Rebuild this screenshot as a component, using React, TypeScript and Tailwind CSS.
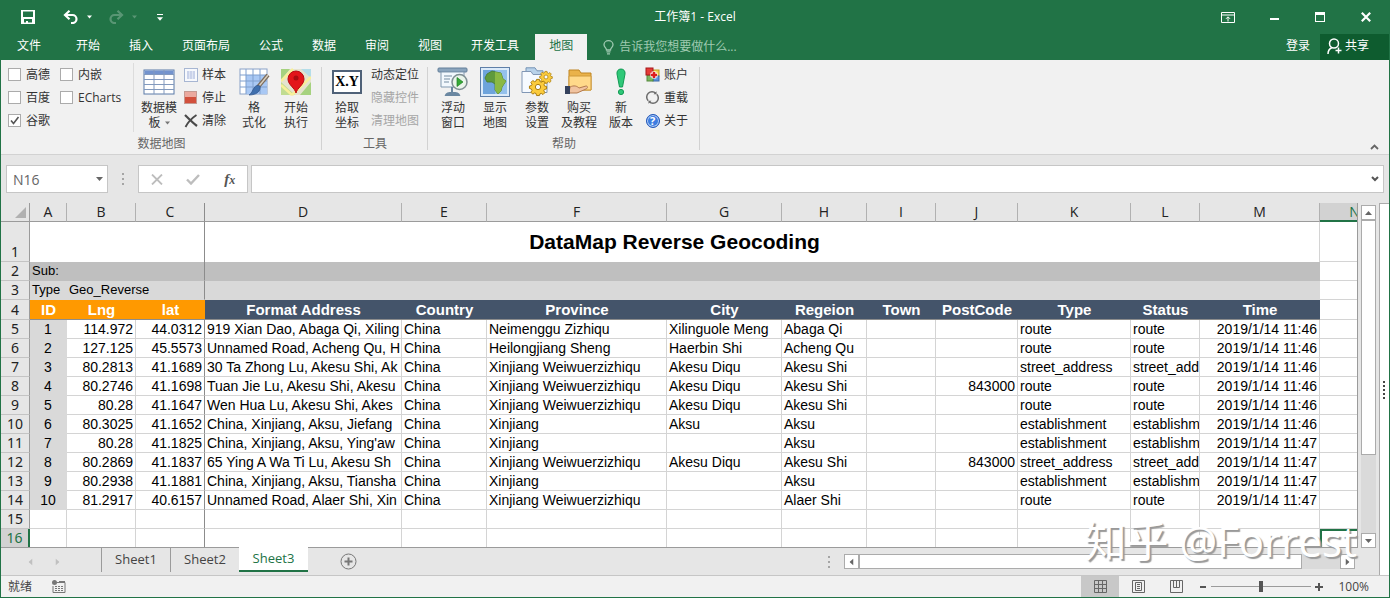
import type { ReactNode } from "react";
import clsx from "clsx";

const menuTabs = ["开始", "插入", "页面布局", "公式", "数据", "审阅", "视图", "开发工具"];

const columns = [
  { name: "A", width: 37 },
  { name: "B", width: 69 },
  { name: "C", width: 69 },
  { name: "D", width: 197 },
  { name: "E", width: 85 },
  { name: "F", width: 180 },
  { name: "G", width: 115 },
  { name: "H", width: 85 },
  { name: "I", width: 69 },
  { name: "J", width: 82 },
  { name: "K", width: 113 },
  { name: "L", width: 69 },
  { name: "M", width: 120 },
  { name: "N", width: 69 },
];

const headings = [
  "ID", "Lng", "lat", "Format Address", "Country", "Province", "City",
  "Regeion", "Town", "PostCode", "Type", "Status", "Time",
];

const rows = [
  ["1", "114.972", "44.0312", "919 Xian Dao, Abaga Qi, Xiling", "China", "Neimenggu Zizhiqu", "Xilinguole Meng", "Abaga Qi", "", "", "route", "route", "2019/1/14 11:46"],
  ["2", "127.125", "45.5573", "Unnamed Road, Acheng Qu, H", "China", "Heilongjiang Sheng", "Haerbin Shi", "Acheng Qu", "", "", "route", "route", "2019/1/14 11:46"],
  ["3", "80.2813", "41.1689", "30 Ta Zhong Lu, Akesu Shi, Ak", "China", "Xinjiang Weiwuerzizhiqu", "Akesu Diqu", "Akesu Shi", "", "", "street_address", "street_address", "2019/1/14 11:46"],
  ["4", "80.2746", "41.1698", "Tuan Jie Lu, Akesu Shi, Akesu", "China", "Xinjiang Weiwuerzizhiqu", "Akesu Diqu", "Akesu Shi", "", "843000", "route", "route", "2019/1/14 11:46"],
  ["5", "80.28", "41.1647", "Wen Hua Lu, Akesu Shi, Akes", "China", "Xinjiang Weiwuerzizhiqu", "Akesu Diqu", "Akesu Shi", "", "", "route", "route", "2019/1/14 11:46"],
  ["6", "80.3025", "41.1652", "China, Xinjiang, Aksu, Jiefang", "China", "Xinjiang", "Aksu", "Aksu", "", "", "establishment", "establishment", "2019/1/14 11:46"],
  ["7", "80.28", "41.1825", "China, Xinjiang, Aksu, Ying'aw", "China", "Xinjiang", "", "Aksu", "", "", "establishment", "establishment", "2019/1/14 11:47"],
  ["8", "80.2869", "41.1837", "65 Ying A Wa Ti Lu, Akesu Sh", "China", "Xinjiang Weiwuerzizhiqu", "Akesu Diqu", "Akesu Shi", "", "843000", "street_address", "street_address", "2019/1/14 11:47"],
  ["9", "80.2938", "41.1881", "China, Xinjiang, Aksu, Tiansha", "China", "Xinjiang", "", "Aksu", "", "", "establishment", "establishment", "2019/1/14 11:47"],
  ["10", "81.2917", "40.6157", "Unnamed Road, Alaer Shi, Xin", "China", "Xinjiang Weiwuerzizhiqu", "", "Alaer Shi", "", "", "route", "route", "2019/1/14 11:47"],
];

const rightAligned = [1, 2, 9, 12];

/* ---------- icons ---------- */

function Caret({ className }: { className?: string }) {
  return (
    <svg width="7" height="4" viewBox="0 0 7 4" className={className}>
      <path d="M0 0h7L3.5 4z" fill="currentColor" />
    </svg>
  );
}

const SaveIcon = () => (
  <svg width="14" height="14" viewBox="0 0 14 14">
    <path
      fill="#fff"
      fillRule="evenodd"
      d="M0 0h14v14H0zM2 1.500v5.500h10V1.500zM3 9v3.500h2V11h2v1.500h4V9z"
    />
  </svg>
);

const UndoIcon = ({ flip }: { flip?: boolean }) => (
  <svg width="16" height="14" viewBox="0 0 16 14" className={flip ? "-scale-x-100 opacity-25" : ""}>
    <path d="M2 5h7.500a4 4 0 0 1 0 8H8" fill="none" stroke="#fff" strokeWidth="2.200" />
    <path d="M6.500.8L2 5l4.500 4.200" fill="none" stroke="#fff" strokeWidth="2.200" />
  </svg>
);

const BulbIcon = () => (
  <svg width="11" height="15" viewBox="0 0 11 15" fill="none" stroke="#9fcab1" strokeWidth="1.300">
    <path d="M3.500 10c0-2-2.500-2.800-2.500-5.300a4.500 4 0 0 1 9 0C10 7.200 7.500 8 7.500 10z" />
    <path d="M3.500 11.800h4M4 13.800h3" />
  </svg>
);

const PersonIcon = () => (
  <svg width="16" height="17" viewBox="0 0 16 17" fill="none" stroke="#fff" strokeWidth="1.500">
    <circle cx="7" cy="5.500" r="4.500" />
    <path d="M1 16c0-3.500 1.800-5.500 4-6.500M11.500 9.500v6M8.500 12.500h6" />
  </svg>
);

const DataTableIcon = () => (
  <svg width="32" height="28" viewBox="0 0 32 28">
    <rect x="1" y="2" width="30" height="24" fill="#fff" stroke="#5a7aa8" />
    <rect x="1.500" y="2.500" width="29" height="4" fill="#7393ce" />
    <path d="M1 6.500h30M1 11.500h30M1 16.500h30M1 21.500h30M11 2v24M21 2v24" stroke="#8299bd" />
  </svg>
);

const FormatIcon = () => (
  <svg width="32" height="30" viewBox="0 0 32 30">
    <rect x="2" y="2" width="27" height="25" fill="#fff" stroke="#8aa2c8" />
    <path d="M8 8h21v19H8z" fill="#a9c8f4" />
    <path d="M2 8h27M2 14h27M2 20h27M8 2v25M15 2v25M22 2v25" stroke="#7f9fce" />
    <path d="M30 8L20 20" stroke="#7b6a58" strokeWidth="4" />
    <path d="M30 8L21 19" stroke="#d8cfc0" strokeWidth="1.500" />
    <path d="M22 19c1 5-3 9-11 9 3-2 3-4 5-7 2-3 4-3 6-2z" fill="#3f6fae" stroke="#2b5088" strokeWidth=".7" />
  </svg>
);

const MapPinIcon = () => (
  <svg width="30" height="28" viewBox="0 0 30 28">
    <path d="M0 1h30v26H0z" fill="#e5e3cf" />
    <path d="M0 1h9L0 12zM19 27L30 14v13z" fill="#a6d27f" />
    <path d="M0 14L14 27H0z" fill="#c1dc92" />
    <path d="M20 1h10v9z" fill="#b4dde9" />
    <path d="M0 13L12 1M11 27L30 9M0 17l11 10" stroke="#f8ef9a" strokeWidth="2.500" />
    <path d="M15 25c-1-5-8-8-8-14a8 8 0 0 1 16 0c0 6-7 9-8 14z" fill="#e3151a" stroke="#b80c12" />
    <circle cx="15" cy="10" r="2.500" fill="#a80d10" />
  </svg>
);

const CoordIcon = () => (
  <span className="flex h-6 w-[30px] items-center justify-center border-2 border-[#4f6178] bg-white font-['Liberation_Serif',serif] text-[14px] leading-none font-bold text-black">
    X.Y
  </span>
);

const BoardIcon = () => (
  <svg width="32" height="30" viewBox="0 0 32 30">
    <rect x="1" y="1" width="29" height="4" rx="1" fill="#8ba5bd" stroke="#637f99" />
    <path d="M4 5h23v15H4z" fill="#f2f8fd" stroke="#8199b0" />
    <path d="M7 9h8M7 12h6M7 15h5" stroke="#9fb0c0" strokeWidth="1.500" />
    <path d="M15 20v6M9 28c1-3 12-3 13 0z" fill="#7d9ab5" stroke="#6a87a1" strokeWidth="2" />
    <circle cx="22.500" cy="15" r="7.500" fill="#eaf4ea" stroke="#7e8e92" strokeWidth="1.500" />
    <path d="M20 10.500v9l6-4.500z" fill="#35a935" stroke="#1d7e25" strokeWidth=".7" />
  </svg>
);

const ContinentIcon = () => (
  <svg width="30" height="30" viewBox="0 0 30 30">
    <rect x=".5" y=".5" width="29" height="29" fill="#dcebfa" stroke="#5f7fa8" />
    <path d="M3 3h12v24H3z" fill="#6ea4dc" />
    <path d="M15 3h12v24H15z" fill="#94c1ec" />
    <path d="M7 7l5-3 4 1 5 1 2 6 3 2-4 6-1 4-3 3-3-4v-6l-3-2-5 0-2-4z" fill="#5f9a3c" stroke="#48792c" strokeWidth=".8" />
    <path d="M15 5l6 1 2 6 3 2-4 6-1 4-3 3-3-4z" fill="#8ab944" />
  </svg>
);

const Gear = ({ x, y, scale }: { x: number; y: number; scale: number }) => (
  <g transform={`translate(${x} ${y}) scale(${scale})`} stroke="#a87808">
    <path
      d="M-1.500-8h3l.5 2.200 1.600.7L5.600-6.300l2 2L6.300-2.400l.6 1.400L9-.500v2.500l-2.300.6-.6 1.400 1.200 1.900-2 2-1.900-1.200-1.400.6L1.500 9h-3l-.5-2.100-1.600-.6-1.900 1.200-2-2 1.200-1.900-.6-1.400L-9 1.500v-2.500l2.100-.5.6-1.400-1.200-1.900 2-2 1.900 1.200 1.600-.7z"
      fill="#fbcb3c"
    />
    <circle r="2.800" fill="#f6faff" />
  </g>
);

const GearsIcon = () => (
  <svg width="32" height="30" viewBox="0 0 32 30">
    <path d="M5 .8h9l2 3h6V20H5z" fill="#b8d2ea" stroke="#7793b5" />
    <path d="M1 4.500h9l2 3h14v18H1z" fill="#f6faff" stroke="#8197b5" />
    <Gear x={25} y={10} scale={0.7} />
    <Gear x={17} y={20} scale={0.95} />
  </svg>
);

const FolderIcon = () => (
  <svg width="30" height="30" viewBox="0 0 30 30">
    <path d="M5 3h10l2 3h10v17H5z" fill="#eab24a" stroke="#bf8523" />
    <path d="M5 9h22v14H5z" fill="#ffd98a" stroke="#cf9a3a" />
    <path d="M6 20c4-2 7-1 9 1l7-2c2 0 2 2 0 3l-9 4-8 0z" fill="#f0c3a0" stroke="#b37a4e" />
    <path d="M1 19h5v8H1z" fill="#34415c" />
  </svg>
);

const ExclaimIcon = () => (
  <svg width="12" height="30" viewBox="0 0 12 30">
    <path d="M6 2c2.500 0 4.500 2 4 5L7.500 20h-3L2 7c-.5-3 1.500-5 4-5z" fill="#2fc878" stroke="#139a54" />
    <circle cx="6" cy="25" r="2.600" fill="#2fc878" stroke="#139a54" />
  </svg>
);

const SampleIcon = () => (
  <svg width="14" height="14" viewBox="0 0 14 14">
    <rect x=".5" y=".5" width="13" height="13" fill="#f7f9fd" stroke="#a7b6d2" />
    <path d="M3 3h8v8H3z" fill="#c9d2ea" />
    <path d="M5.500 3v8M8.500 3v8" stroke="#dfe5f3" />
  </svg>
);

const StopIcon = () => (
  <svg width="13" height="13" viewBox="0 0 13 13">
    <rect x=".5" y=".5" width="12" height="12" fill="#d2503c" stroke="#c59a92" />
    <path d="M1 1h11v5H1z" fill="#eba99e" />
  </svg>
);

const ClearIcon = () => (
  <svg width="14" height="14" viewBox="0 0 14 14" fill="none" stroke="#4a4a4a">
    <path d="M1 1c4 4 8 8 12 11" strokeWidth="2.200" />
    <path d="M12.500 1C8 4 4 8 1.500 13" strokeWidth="1.800" />
  </svg>
);

const AccountIcon = () => (
  <svg width="15" height="15" viewBox="0 0 15 15">
    <rect x="6" y="3" width="8" height="6" fill="#f5d24e" stroke="#c19b22" />
    <rect x="8" y="9" width="6" height="5" fill="#5d93dc" stroke="#3968a8" />
    <rect x="2" y="8" width="6" height="6" fill="#7bb661" stroke="#54893d" />
    <rect x="1" y="1" width="7" height="7" fill="#e43b36" stroke="#a7191a" />
    <path d="M9 4.500v7M5.500 8h7" stroke="#fff" strokeWidth="4.500" />
    <path d="M9 5v6M6 8h6" stroke="#dc1f1f" strokeWidth="2.600" />
  </svg>
);

const ReloadIcon = () => (
  <svg width="15" height="15" viewBox="0 0 15 15" fill="none" stroke="#6b6b6b" strokeWidth="1.500">
    <path d="M3.200 10.800A5.300 5.300 0 0 1 10.800 3.400M11.800 4.200A5.300 5.300 0 0 1 4.200 11.700" />
    <path d="M11.500 1.200v3H8.500zM3.500 13.800v-3h3z" fill="#6b6b6b" stroke="none" />
  </svg>
);

const HelpIcon = () => (
  <span className="flex size-[14px] items-center justify-center rounded-full border border-[#2458b8] bg-[#3d7de0] text-[11px] leading-none font-bold text-white shadow-[inset_0_0_0_1px_#b9d2f7]">
    ?
  </span>
);

/* ---------- ribbon ---------- */

function Check({ label, checked }: { label: string; checked?: boolean }) {
  return (
    <label className="flex h-[23px] items-center gap-[5px]">
      <input
        type="checkbox"
        defaultChecked={checked}
        className="peer size-[13px] shrink-0 appearance-none border border-[#ababab] bg-white"
      />
      <svg
        viewBox="0 0 13 13"
        className="invisible -ml-[18px] size-[13px] shrink-0 peer-checked:visible"
        fill="none"
        stroke="#555"
        strokeWidth="1.6"
      >
        <path d="M3 6.500l2.500 3L10.500 3" />
      </svg>
      {label}
    </label>
  );
}

function BigButton({ icon, lines, caret }: { icon: ReactNode; lines: string[]; caret?: boolean }) {
  return (
    <button className="flex w-[42px] flex-col items-center whitespace-nowrap">
      <span className="flex h-[37px] items-center">{icon}</span>
      <span className="leading-[15px]">{lines[0]}</span>
      <span className="flex items-center gap-1 leading-[15px]">
        {lines[1]}
        {caret && <Caret className="w-[5px] text-[#777]" />}
      </span>
    </button>
  );
}

function SmallButton({ icon, label, disabled }: { icon?: ReactNode; label: string; disabled?: boolean }) {
  return (
    <button disabled={disabled} className="flex h-[23px] items-center gap-1 whitespace-nowrap disabled:text-[#a6a6a6]">
      {icon && <span className="flex w-[15px] justify-center">{icon}</span>}
      {label}
    </button>
  );
}

function Group({ title, className, children }: { title?: string; className?: string; children: ReactNode }) {
  return (
    <section className="relative flex flex-col after:absolute after:top-1 after:right-0 after:bottom-1 after:w-px after:bg-[#d2d2d2]">
      <div className={clsx("flex h-[71px] items-start pl-1", className)}>{children}</div>
      <h2 className="text-center leading-[20px] text-[#666]">{title}</h2>
    </section>
  );
}

function Ribbon() {
  return (
    <div className="flex border-b border-[#d2d2d2] bg-[#f1f1f1] pt-[3px]">
      <Group title="数据地图" className="pr-[5px]">
        <div className="mr-1 grid grid-cols-[52px_73px] grid-rows-3 border-r border-[#dcdcdc] pl-[3px]">
          <Check label="高德" />
          <Check label="内嵌" />
          <Check label="百度" />
          <Check label="ECharts" />
          <Check label="谷歌" checked />
        </div>
        <BigButton icon={<DataTableIcon />} lines={["数据模", "板"]} caret />
        <div className="mx-[3px] w-[47px]">
          <SmallButton icon={<SampleIcon />} label="样本" />
          <SmallButton icon={<StopIcon />} label="停止" />
          <SmallButton icon={<ClearIcon />} label="清除" />
        </div>
        <BigButton icon={<FormatIcon />} lines={["格", "式化"]} />
        <BigButton icon={<MapPinIcon />} lines={["开始", "执行"]} />
      </Group>
      <Group title="工具" className="pr-[9px]">
        <BigButton icon={<CoordIcon />} lines={["拾取", "坐标"]} />
        <div className="ml-[3px]">
          <SmallButton label="动态定位" />
          <SmallButton label="隐藏控件" disabled />
          <SmallButton label="清理地图" disabled />
        </div>
      </Group>
      <Group title="帮助" className="pr-3">
        <BigButton icon={<BoardIcon />} lines={["浮动", "窗口"]} />
        <BigButton icon={<ContinentIcon />} lines={["显示", "地图"]} />
        <BigButton icon={<GearsIcon />} lines={["参数", "设置"]} />
        <BigButton icon={<FolderIcon />} lines={["购买", "及教程"]} />
        <BigButton icon={<ExclaimIcon />} lines={["新", "版本"]} />
        <div className="ml-[3px]">
          <SmallButton icon={<AccountIcon />} label="账户" />
          <SmallButton icon={<ReloadIcon />} label="重载" />
          <SmallButton icon={<HelpIcon />} label="关于" />
        </div>
      </Group>
      <button aria-label="折叠功能区" className="mr-[10px] mb-1 ml-auto self-end">
        <svg width="9" height="6" viewBox="0 0 9 6" fill="none" stroke="#666" strokeWidth="1.800">
          <path d="M1 5l3.500-3.500L8 5" />
        </svg>
      </button>
    </div>
  );
}

/* ---------- title bar and menu ---------- */

function TitleBar() {
  return (
    <header className="grid h-[34px] grid-cols-[1fr_auto_1fr] items-center bg-[#217346] text-white">
      <div className="flex items-center pl-5">
        <button aria-label="保存"><SaveIcon /></button>
        <button aria-label="撤消" className="ml-7 flex items-center gap-2">
          <UndoIcon />
          <Caret className="w-[5px]" />
        </button>
        <button aria-label="恢复" className="ml-4 flex items-center gap-2">
          <UndoIcon flip />
          <Caret className="w-[5px] opacity-25" />
        </button>
        <button aria-label="自定义快速访问工具栏" className="ml-5 flex flex-col items-center gap-[2px]">
          <span className="h-px w-[6px] bg-white" />
          <Caret className="w-[6px]" />
        </button>
      </div>
      <h1>工作簿1 - Excel</h1>
      <div className="flex justify-end">
        <button aria-label="功能区显示选项" className="flex w-[46px] justify-center">
          <svg width="14" height="11" viewBox="0 0 14 11" fill="none" stroke="#fff">
            <path d="M.5.5h13v10H.5zM.5 3h13M7 9.500V5M5 6.800l2-2 2 2" />
          </svg>
        </button>
        <button aria-label="最小化" className="flex w-[46px] items-center justify-center">
          <span className="mt-1 h-[2px] w-[9px] bg-white" />
        </button>
        <button aria-label="最大化" className="flex w-[46px] justify-center">
          <span className="h-[10px] w-[10px] border border-t-[3px] border-white" />
        </button>
        <button aria-label="关闭" className="flex w-[46px] justify-center">
          <svg width="10" height="10" viewBox="0 0 10 10" stroke="#fff" strokeWidth="2.200">
            <path d="M.8.8l8.400 8.400M9.200.8L.8 9.200" />
          </svg>
        </button>
      </div>
    </header>
  );
}

function MenuBar() {
  return (
    <nav className="flex h-[26px] bg-[#217346] text-white">
      <button className="mr-px w-[60px] pr-1 pb-[2px]">文件</button>
      {menuTabs.map((tab) => (
        <button key={tab} className="mr-px px-[14px] pb-[2px]">{tab}</button>
      ))}
      <button className="ml-px bg-[#f1f1f1] px-[14px] pb-[2px] text-[#217346]">地图</button>
      <label className="ml-4 flex items-center gap-[5px]">
        <BulbIcon />
        <input
          type="text"
          aria-label="告诉我您想要做什么"
          placeholder="告诉我您想要做什么..."
          className="w-40 outline-none placeholder:text-[#9fcab1]"
        />
      </label>
      <button className="ml-auto px-[10px] pb-[2px]">登录</button>
      <button className="flex w-[69px] items-center gap-[2px] bg-[#0e5c2f] pb-[2px] pl-[7px]">
        <PersonIcon />
        共享
      </button>
    </nav>
  );
}

function FormulaBar() {
  return (
    <div className="flex h-12 items-center bg-[#e6e6e6] pr-[5px] pl-[5px] text-[#666]">
      <div className="flex h-7 w-[102px] items-center border border-[#c6c6c6] bg-white pr-1">
        <input aria-label="名称框" defaultValue="N16" className="w-full min-w-0 pl-[6px] text-[14px] outline-none" />
        <button aria-label="名称列表"><Caret /></button>
      </div>
      <svg width="30" height="12" viewBox="0 0 30 12" fill="#a5a5a5">
        <path d="M14 0h2v2h-2zM14 5h2v2h-2zM14 10h2v2h-2z" />
      </svg>
      <div className="flex h-7 w-[110px] items-center justify-around border border-[#c6c6c6] bg-white">
        <button aria-label="取消">
          <svg width="12" height="11" viewBox="0 0 12 11" stroke="#bdbdbd" strokeWidth="1.800">
            <path d="M1 .5l10 10M11 .5l-10 10" />
          </svg>
        </button>
        <button aria-label="输入">
          <svg width="14" height="11" viewBox="0 0 14 11" fill="none" stroke="#bdbdbd" strokeWidth="2.400">
            <path d="M1 5.500L5 9.500 13 1" />
          </svg>
        </button>
        <button className="font-['Liberation_Serif',serif] text-[15px] leading-none font-bold text-[#555] italic">
          f<span className="text-[12px]">x</span>
        </button>
      </div>
      <div className="ml-[3px] flex h-7 flex-1 items-center border border-[#c6c6c6] bg-white pr-1">
        <input aria-label="编辑栏" className="flex-1 outline-none" />
        <button aria-label="展开编辑栏">
          <svg width="8" height="6" viewBox="0 0 8 6" fill="none" stroke="#555" strokeWidth="2">
            <path d="M1 1l3 3 3-3" />
          </svg>
        </button>
      </div>
    </div>
  );
}

/* ---------- sheet ---------- */

function RowHead({ n, active }: { n: number; active?: boolean }) {
  return (
    <th
      scope="row"
      className={clsx(
        "p-0 text-center align-bottom font-['Noto_Sans',sans-serif] text-[14px] leading-[18px] font-normal",
        active
          ? "border-r-2 border-[#217346] bg-[#d2d2d2] text-[#217346]"
          : "border-r border-b border-r-[#9b9b9b] border-b-[#c4c4c4] bg-[#e6e6e6] text-[#222]"
      )}
    >
      {n}
    </th>
  );
}

const cell = "overflow-hidden border-r border-b px-[2px] py-0 leading-[18px] whitespace-nowrap";

function BlankCells({ last }: { last?: boolean }) {
  return columns.map((c) => (
    <td
      key={c.name}
      className={clsx(
        cell,
        last && c.name === "N" && "border-t-2 border-l-2 border-t-[#217346] border-l-[#217346]",
        c.name === "C" ? "border-r-[#8c8c8c]" : "border-r-[#d4d4d4]",
        last ? "border-b-0" : "border-b-[#d4d4d4]"
      )}
    />
  ));
}

function Sheet() {
  const edge = <td className={`${cell} border-[#d4d4d4]`} />;
  return (
    <div className="min-w-0 flex-1 overflow-hidden border-r border-b border-[#9b9b9b] bg-white">
      <table className="w-[1388px] table-fixed border-separate border-spacing-0 font-['Liberation_Sans',Arial,sans-serif] text-[14px] text-black">
        <colgroup>
          <col className="w-[29px]" />
          {columns.map((c) => (
            <col key={c.name} style={{ width: c.width }} />
          ))}
        </colgroup>
        <thead>
          <tr className="h-[19px] bg-[#e6e6e6] text-[14px] text-[#222]">
            <th className="border-r border-b border-[#9b9b9b] p-0 align-bottom">
              <svg width="11" height="11" viewBox="0 0 11 11" className="mr-[3px] mb-[3px] ml-auto">
                <path d="M11 0v11H0z" fill="#b1b1b1" />
              </svg>
            </th>
            {columns.map((c) => (
              <th
                key={c.name}
                scope="col"
                className={clsx(
                  "p-0 text-center font-['Open_Sans',sans-serif] font-normal",
                  c.name === "N"
                    ? "border-b-2 border-[#217346] bg-[#d2d2d2] leading-[17px] text-[#217346]"
                    : "border-r border-b border-b-[#9b9b9b] leading-[18px]",
                  c.name === "C" ? "border-r-[#8c8c8c]" : "border-r-[#b1b1b1]"
                )}
              >
                {c.name}
              </th>
            ))}
          </tr>
        </thead>
        <tbody>
          <tr className="h-10">
            <RowHead n={1} />
            <td colSpan={13} className="relative border-r border-[#d4d4d4] p-0 text-center text-[21px] leading-[24px] font-bold">
              <span className="absolute inset-y-0 left-[174px] w-px bg-[#8c8c8c]" />
              DataMap Reverse Geocoding
            </td>
            {edge}
          </tr>
          <tr className="h-[19px] text-[13px]">
            <RowHead n={2} />
            <td colSpan={3} className={`${cell} border-r-[#8c8c8c] border-b-[#bfbfbf] bg-[#bfbfbf]`}>Sub:</td>
            <td colSpan={10} className={`${cell} border-[#bfbfbf] bg-[#bfbfbf]`} />
            {edge}
          </tr>
          <tr className="h-[19px] text-[13px]">
            <RowHead n={3} />
            <td className={`${cell} border-[#d9d9d9] bg-[#d9d9d9]`}>Type</td>
            <td colSpan={2} className={`${cell} border-r-[#8c8c8c] border-b-[#d9d9d9] bg-[#d9d9d9]`}>Geo_Reverse</td>
            <td colSpan={10} className={`${cell} border-[#d9d9d9] bg-[#d9d9d9]`} />
            {edge}
          </tr>
          <tr className="h-5 text-[15px]">
            <RowHead n={4} />
            {headings.map((h, i) => (
              <td
                key={h}
                className={clsx(
                  "border-b border-b-[#8c8c8c] p-0 text-center leading-[19px] font-bold text-white",
                  i < 3 ? "bg-[#ff9900]" : "bg-[#44546a]"
                )}
              >
                {h}
              </td>
            ))}
            {edge}
          </tr>
          {rows.map((row, r) => (
            <tr key={row[0]} className="h-[19px]">
              <RowHead n={r + 5} />
              {row.map((value, i) => (
                <td
                  key={i}
                  className={clsx(
                    cell,
                    i === 0 && "border-[#d9d9d9] bg-[#d9d9d9] text-center",
                    i === 2 && "border-r-[#8c8c8c] border-b-[#d4d4d4]",
                    i !== 0 && i !== 2 && "border-[#d4d4d4]",
                    rightAligned.includes(i) && "text-right"
                  )}
                >
                  {value}
                </td>
              ))}
              {edge}
            </tr>
          ))}
          <tr className="h-[19px]">
            <RowHead n={15} />
            <BlankCells />
          </tr>
          <tr className="h-[18px]">
            <RowHead n={16} active />
            <BlankCells last />
          </tr>
        </tbody>
      </table>
    </div>
  );
}

const scrollButton = "flex size-[15px] shrink-0 items-center justify-center border border-[#ababab] bg-white text-[#666]";

function VerticalScroll() {
  return (
    <div className="flex w-[21px] flex-col items-center bg-[#e6e6e6] pt-[2px]">
      <button aria-label="向上滚动" className={scrollButton}><Caret className="rotate-180" /></button>
      <div className="w-[15px] flex-1 bg-[#dadada]">
        <div className="h-3/4 border border-[#ababab] bg-white" />
      </div>
      <button aria-label="向下滚动" className={scrollButton}><Caret /></button>
    </div>
  );
}

function SheetTabs() {
  return (
    <div className="flex h-[27px] bg-[#e6e6e6] text-[13px] text-[#444]">
      <div className="flex w-[100px] items-center gap-5 pl-[26px] text-[#c0c0c0]">
        <button aria-label="上一个"><Caret className="rotate-90" /></button>
        <button aria-label="下一个"><Caret className="-rotate-90" /></button>
      </div>
      <button className="h-6 w-[69px] border-l border-[#9b9b9b]">Sheet1</button>
      <button className="h-6 w-[69px] border-l border-[#9b9b9b]">Sheet2</button>
      <button className="-mt-px h-[25px] w-[69px] border-b-2 border-[#217346] bg-white text-[#217346]">Sheet3</button>
      <button aria-label="新工作表" className="ml-8">
        <svg width="17" height="17" viewBox="0 0 17 17" fill="none" stroke="#777">
          <circle cx="8.500" cy="8.500" r="7.500" />
          <path d="M8.500 4.500v8M4.500 8.500h8" strokeWidth="2" />
        </svg>
      </button>
      <div className="ml-auto flex w-[40%] items-center pr-6">
        <svg width="16" height="12" viewBox="0 0 16 12" fill="#a5a5a5" className="shrink-0">
          <path d="M0 0h2v2H0zM0 5h2v2H0zM0 10h2v2H0z" />
        </svg>
        <div className="flex flex-1">
          <button aria-label="向左滚动" className={scrollButton}><Caret className="rotate-90" /></button>
          <div className="flex-1 bg-[#dadada]">
            <div className="h-full w-[92%] border border-[#ababab] bg-white" />
          </div>
          <button aria-label="向右滚动" className={scrollButton}><Caret className="-rotate-90" /></button>
        </div>
      </div>
    </div>
  );
}

function StatusBar() {
  return (
    <footer className="flex h-[22px] items-center border-t border-[#c6c6c6] bg-[#f1f1f1] pl-[7px] text-[#444]">
      <span>就绪</span>
      <svg width="14" height="13" viewBox="0 0 14 13" fill="none" stroke="#777" className="ml-5">
        <path d="M5 2.500h8v10H1V6M7 1.500h6" />
        <path d="M3 6.500h2M6 6.500h2M9 6.500h2M3 8.500h2M6 8.500h2M9 8.500h2M3 10.500h2M6 10.500h2M9 10.500h2" />
        <circle cx="2.500" cy="2.500" r="2.500" fill="#777" stroke="none" />
      </svg>
      <div className="ml-auto flex h-full">
        <button aria-label="普通" className="flex w-[38px] items-center justify-center bg-[#c8c8c8]">
          <svg width="13" height="13" viewBox="0 0 13 13" fill="none" stroke="#666">
            <path d="M.5.5h12v12H.5zM4.500.5v12M8.500.5v12M.5 4.500h12M.5 8.500h12" />
          </svg>
        </button>
        <button aria-label="页面布局视图" className="flex w-[38px] items-center justify-center">
          <svg width="13" height="13" viewBox="0 0 13 13" fill="none" stroke="#666">
            <path d="M.5.5h12v12H.5zM3.500 2.500h6v8h-6zM5 4.500h3M5 6.500h3M5 8.500h3" />
          </svg>
        </button>
        <button aria-label="分页预览" className="flex w-[38px] items-center justify-center">
          <svg width="13" height="13" viewBox="0 0 13 13" fill="none" stroke="#666">
            <path d="M.5.5h12v12H.5zM3.500.5v7h6v-7M6.500.5v7" />
          </svg>
        </button>
      </div>
      <button aria-label="缩小" className="ml-[2px] flex h-4 w-3 items-center justify-center">
        <span className="h-[2px] w-[6px] bg-[#555]" />
      </button>
      <input
        type="range"
        aria-label="显示比例"
        defaultValue={50}
        className="mx-[2px] h-3 w-[100px] appearance-none bg-[linear-gradient(#9b9b9b,#9b9b9b)] bg-[length:100%_1px] bg-center bg-no-repeat [&::-webkit-slider-thumb]:h-[11px] [&::-webkit-slider-thumb]:w-1 [&::-webkit-slider-thumb]:appearance-none [&::-webkit-slider-thumb]:bg-[#555]"
      />
      <button aria-label="放大" className="flex w-3 justify-center">
        <svg width="8" height="8" viewBox="0 0 8 8" stroke="#555" strokeWidth="2">
          <path d="M4 0v8M0 4h8" />
        </svg>
      </button>
      <button className="mr-5 ml-[13px] text-[12px]">100%</button>
    </footer>
  );
}

export default function App() {
  return (
    <div className="relative min-h-screen overflow-hidden border-x border-b border-[#217346] bg-[#f1f1f1] font-['Open_Sans','Noto_Sans_CJK_SC',sans-serif] text-[12px] text-[#333]">
      <TitleBar />
      <MenuBar />
      <Ribbon />
      <FormulaBar />
      <main className="flex bg-[#e6e6e6]">
        <div className="min-w-0 flex-1">
          <div className="flex">
            <Sheet />
            <VerticalScroll />
          </div>
          <SheetTabs />
        </div>
        <div className="flex w-[10px] items-center justify-center border-t border-l border-[#ababab] bg-white">
          <svg width="3" height="18" viewBox="0 0 3 18" fill="#444">
            <path d="M0 0h2v2H0zM0 4h2v2H0zM0 8h2v2H0zM0 12h2v2H0zM0 16h2v2H0z" />
          </svg>
        </div>
      </main>
      <StatusBar />
      <p className="pointer-events-none absolute right-8 bottom-8 text-[42px] leading-[48px] text-white [text-shadow:2px_2px_1px_#999]">
        知乎 @Forrest
      </p>
    </div>
  );
}
